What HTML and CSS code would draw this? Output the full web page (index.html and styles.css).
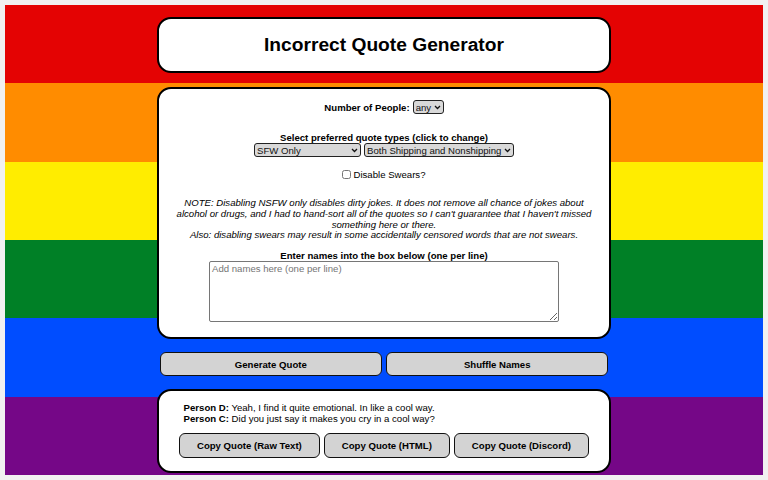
FILE: index.html
```html
<!DOCTYPE html>
<html lang="en">
<head>
  <meta charset="UTF-8" />
  <meta name="viewport" content="width=device-width, initial-scale=1.0"/>
  <title>Incorrect Quote Generator</title>
  <link rel="stylesheet" href="styles.css">
</head>
<body>
  <div class="flag">
    <div class="box title-box">
      <h1>Incorrect Quote Generator</h1>
    </div>

    <div class="box settings">
      <div class="people-row">
        <b>Number of People:</b>
        <select id="peopleCount">
          <option>any</option>
          <option>1</option>
          <option>2</option>
          <option>3</option>
          <option>4</option>
          <option>5</option>
          <option>6</option>
        </select>
      </div>

      <div class="types">
        <b>Select preferred quote types (click to change)</b>
        <div class="type-row">
          <select id="nsfwSelect" class="nsfw-select">
            <option>SFW Only</option>
            <option>NSFW Only</option>
            <option>Both</option>
          </select>
          <select id="shipSelect">
            <option>Both Shipping and Nonshipping</option>
            <option>Shipping Only</option>
            <option>Nonshipping Only</option>
          </select>
        </div>
      </div>

      <label class="swears"><input type="checkbox" id="noSwears">Disable Swears?</label>

      <p class="note">
        NOTE: Disabling NSFW only disables dirty jokes. It does not remove all chance of jokes about
        alcohol or drugs, and I had to hand-sort all of the quotes so I can't guarantee that I haven't missed
        something here or there.<br>
        Also: disabling swears may result in some accidentally censored words that are not swears.
      </p>

      <b class="names-label">Enter names into the box below (one per line)</b>
      <textarea id="names" placeholder="Add names here (one per line)"></textarea>
    </div>

    <div class="main-buttons">
      <button class="btn" onclick="generateQuote()">Generate Quote</button>
      <button class="btn" onclick="shuffleNames()">Shuffle Names</button>
    </div>

    <div class="box quote-box">
      <div class="quote" id="quote">
        <b>Person D:</b> Yeah, I find it quite emotional. In like a cool way.<br>
        <b>Person C:</b> Did you just say it makes you cry in a cool way?
      </div>
      <div class="copy-row">
        <button class="btn copy-btn" onclick="copyQuote('text')">Copy Quote (Raw Text)</button>
        <button class="btn copy-btn" onclick="copyQuote('html')">Copy Quote (HTML)</button>
        <button class="btn copy-btn" onclick="copyQuote('discord')">Copy Quote (Discord)</button>
      </div>
    </div>
  </div>

  <script>
    function getNames() {
      const list = document.getElementById('names').value
        .split('\n')
        .map(n => n.trim())
        .filter(n => n);
      // fall back to lettered people when the box is empty
      while (list.length < 2) {
        list.push('Person ' + String.fromCharCode(65 + list.length));
      }
      return list;
    }

    function generateQuote() {
      const names = getNames();
      document.getElementById('quote').innerHTML =
        `<b>${names[1]}:</b> Yeah, I find it quite emotional. In like a cool way.<br>` +
        `<b>${names[0]}:</b> Did you just say it makes you cry in a cool way?`;
    }

    function shuffleNames() {
      const box = document.getElementById('names');
      const names = box.value.split('\n').filter(n => n.trim());
      for (let i = names.length - 1; i > 0; i--) {
        const j = Math.floor(Math.random() * (i + 1));
        [names[i], names[j]] = [names[j], names[i]];
      }
      box.value = names.join('\n');
    }

    function copyQuote(kind) {
      const quote = document.getElementById('quote');
      let out = quote.innerText;
      if (kind === 'html') out = quote.innerHTML;
      if (kind === 'discord') out = quote.innerHTML.replace(/<\/?b>/g, '**').replace(/<br>/g, '');
      navigator.clipboard && navigator.clipboard.writeText(out);
    }
  </script>
</body>
</html>
```

FILE: styles.css
```css
body {
  margin: 0;
  background-color: #f1f1f1;
  font-family: 'Liberation Sans', Arial, sans-serif;
  font-size: 9.6px;
  color: #000;
}
.flag {
  margin: 5px;
  height: 470px;
  padding-top: 12px;
  box-sizing: border-box;
  overflow: hidden;
  background: linear-gradient(
    #e40303 0 16.66%,
    #ff8c00 16.66% 33.33%,
    #ffed00 33.33% 50%,
    #008026 50% 66.66%,
    #004dff 66.66% 83.33%,
    #750787 83.33% 100%
  );
  display: flex;
  flex-direction: column;
  align-items: center;
}
.box {
  width: 60%;
  box-sizing: border-box;
  background: #fff;
  border: 2px solid #000;
  border-radius: 14px;
}
.title-box {
  height: 56px;
  display: flex;
  align-items: center;
  justify-content: center;
}
h1 {
  margin: 0;
  font-size: 19.2px;
  font-weight: bold;
}
.settings {
  margin-top: 14px;
  height: 252px;
  padding: 11px 16px 0;
  display: flex;
  flex-direction: column;
  align-items: center;
  text-align: center;
}
/* flat grey dropdowns with a small chevron */
select {
  appearance: none;
  font-family: inherit;
  font-size: 9.6px;
  height: 14px;
  padding: 0 11px 0 2px;
  background: #d9d9d9 url("data:image/svg+xml,%3Csvg xmlns='http://www.w3.org/2000/svg' width='7' height='5' viewBox='0 0 7 5'%3E%3Cpath d='M1 1l2.5 2.5L6 1' fill='none' stroke='%23111' stroke-width='1.3'/%3E%3C/svg%3E") no-repeat right 2px center;
  color: #111;
  border: 1px solid #222;
  border-radius: 3px;
}
.people-row {
  display: flex;
  align-items: center;
  gap: 3px;
  height: 14px;
}
.types {
  margin-top: 18px;
  display: flex;
  flex-direction: column;
  align-items: center;
  line-height: 11px;
}
.type-row {
  display: flex;
  gap: 3px;
}
.nsfw-select {
  width: 107px;
}
.swears {
  margin-top: 10px;
  display: flex;
  align-items: center;
  gap: 2px;
  height: 14px;
}
.swears input {
  margin: 0;
  width: 9px;
  height: 9px;
}
.note {
  margin: 17px 0 0;
  font-style: italic;
  line-height: 10.8px;
}
.names-label {
  margin-top: 9px;
  line-height: 11px;
}
textarea {
  width: 350px;
  height: 61px;
  box-sizing: border-box;
  font-family: inherit;
  font-size: 9.6px;
  padding: 1px 2px;
  border: 1px solid #767676;
  border-radius: 2px;
  resize: vertical;
}
textarea::placeholder {
  color: #757575;
}
.main-buttons {
  width: 60%;
  box-sizing: border-box;
  margin-top: 13px;
  padding: 0 3px;
  display: flex;
  gap: 4px;
}
.btn {
  background: #d3d3d3;
  color: #000;
  border: 1.5px solid #111;
  border-radius: 6px;
  font-family: inherit;
  font-size: 9.6px;
  font-weight: bold;
  white-space: nowrap;
  cursor: pointer;
}
.main-buttons .btn {
  flex: 1;
  height: 24px;
}
.quote-box {
  margin-top: 13px;
  height: 84px;
  padding: 11px 20px 0;
}
.quote {
  padding-left: 5px;
  line-height: 11px;
}
.copy-row {
  margin-top: 9px;
  display: flex;
  justify-content: center;
  gap: 4px;
}
.copy-btn {
  flex-shrink: 0;
  height: 25px;
  padding: 0 17px;
}
```
